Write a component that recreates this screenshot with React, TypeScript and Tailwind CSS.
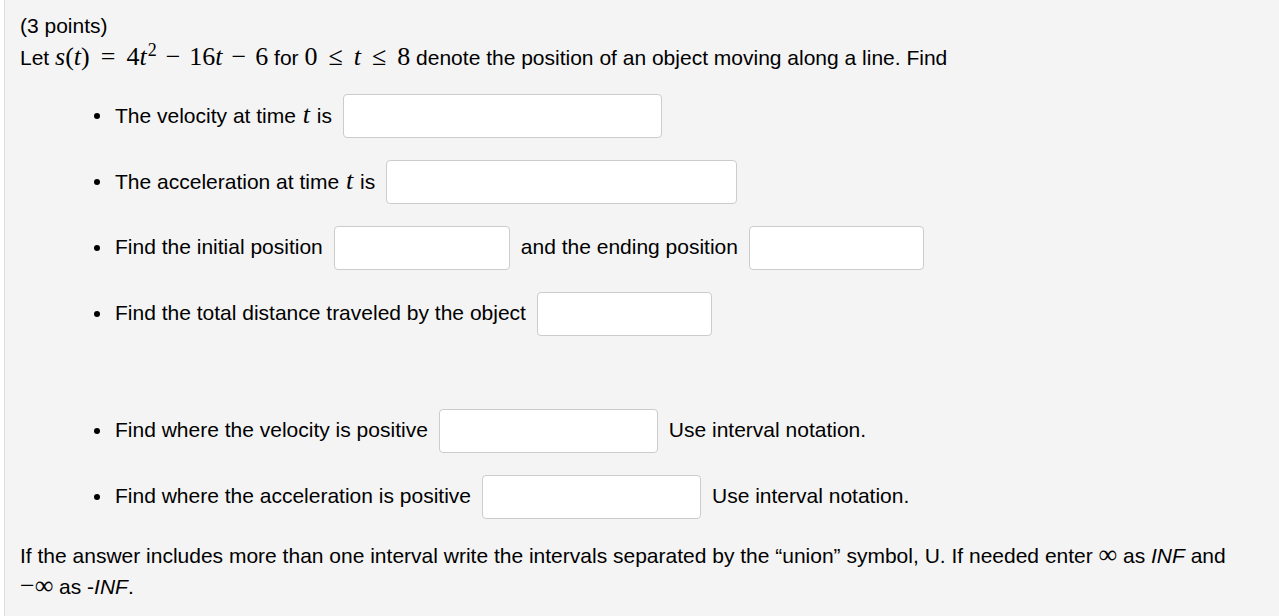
import React from 'react';

// math bits, roughly what MathJax draws
const M = ({ children }: { children: React.ReactNode }) => (
  <span className="font-['Liberation_Serif',serif] text-[26px]">{children}</span>
);
const V = ({ children }: { children: React.ReactNode }) => <span className="italic">{children}</span>;
const Rel = ({ children }: { children: React.ReactNode }) => <span className="mx-[11px]">{children}</span>;
const Bin = ({ children }: { children: React.ReactNode }) => <span className="mx-[9px]">{children}</span>;

const Box = ({ w }: { w: string }) => (
  <span className={`inline-block h-[44px] ${w} rounded-[4px] border border-[#cccccc] bg-white`} />
);

function Item({ children, className = '' }: { children: React.ReactNode; className?: string }) {
  return (
    <li className={`flex h-[44px] items-center ${className}`}>
      <span className="ml-[74px] mr-[15px] h-[6px] w-[6px] rounded-full bg-black" />
      <div className="flex items-center gap-[11px]">{children}</div>
    </li>
  );
}

const T = ({ children }: { children: React.ReactNode }) => <span className="pb-[3px]">{children}</span>;

export default function App() {
  return (
    <div className="min-h-[616px] bg-white pl-[4px] font-['Liberation_Sans',Arial,sans-serif] text-[21px] text-black">
      <div className="min-h-[616px] border-l border-[#dddddd] bg-[#f4f4f4] pl-[15px] pr-[20px] pt-[12px]">
        <div className="h-[28px] leading-[28px]">(3 points)</div>
        <div className="h-[36px] leading-[34px]">
          Let{' '}
          <M>
            <V>s</V>(<V>t</V>)<Rel>=</Rel>4<V>t</V>
            <sup className="ml-[1px] text-[18px]">2</sup>
            <Bin>−</Bin>16<V>t</V>
            <Bin>−</Bin>6
          </M>{' '}
          for{' '}
          <M>
            0<Rel>≤</Rel>
            <V>t</V>
            <Rel>≤</Rel>8
          </M>{' '}
          denote the position of an object moving along a line. Find
        </div>

        <ul className="mt-[18px] flex flex-col gap-[22px]">
          <Item>
            <T>
              The velocity at time <M><span className="px-[1px] italic">t</span></M> is
            </T>
            <Box w="w-[319px]" />
          </Item>
          <Item>
            <T>
              The acceleration at time <M><span className="px-[1px] italic">t</span></M> is
            </T>
            <Box w="w-[351px]" />
          </Item>
          <Item>
            <T>Find the initial position</T>
            <Box w="w-[176px]" />
            <T>and the ending position</T>
            <Box w="w-[175px]" />
          </Item>
          <Item>
            <T>Find the total distance traveled by the object</T>
            <Box w="w-[175px]" />
          </Item>
          <Item className="mt-[51px]">
            <T>Find where the velocity is positive</T>
            <Box w="w-[219px]" />
            <T>Use interval notation.</T>
          </Item>
          <Item>
            <T>Find where the acceleration is positive</T>
            <Box w="w-[219px]" />
            <T>Use interval notation.</T>
          </Item>
        </ul>

        <p className="mt-[21px] leading-[30px]">
          If the answer includes more than one interval write the intervals separated by the “union” symbol, U. If
          needed enter <M>∞</M> as <i>INF</i> and
          <br />
          <M>−∞</M> as -<i>INF</i>.
        </p>
      </div>
    </div>
  );
}
